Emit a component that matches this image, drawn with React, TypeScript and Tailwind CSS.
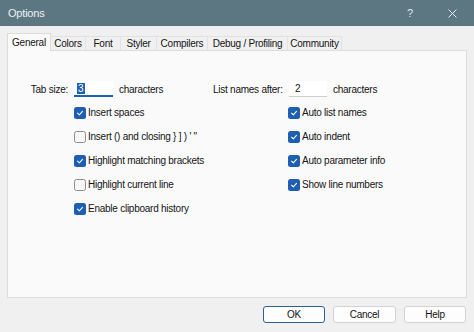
import React from "react";

const font = { fontFamily: '"Liberation Sans", Arial, sans-serif' };

function Check({ checked, label }: { checked: boolean; label: string }) {
  return (
    <div className="flex items-center h-[12px]">
      {checked ? (
        <div className="w-[12px] h-[12px] rounded-[2.5px] bg-[#1e5fb4] flex items-center justify-center shrink-0">
          <svg width="8" height="8" viewBox="0 0 8 8">
            <path d="M1.6 4.2 L3.3 5.8 L6.5 2.3" stroke="white" strokeWidth="1.1" fill="none" strokeLinecap="round" strokeLinejoin="round" />
          </svg>
        </div>
      ) : (
        <div className="w-[12px] h-[12px] rounded-[2.5px] border border-[#8c8c8c] bg-[#f6f6f6] shrink-0" />
      )}
      <span className="ml-[2px] text-[10px] tracking-[-0.25px] text-[#141414] leading-none whitespace-nowrap">{label}</span>
    </div>
  );
}

const tabs = ["General", "Colors", "Font", "Styler", "Compilers", "Debug / Profiling", "Community"];
const tabW = [44, 35, 35, 36, 51, 80, 54];
const insertLabel = "Insert () and closing } ] ) ' \"";

export default function App() {
  return (
    <div className="w-[474px] h-[332px] bg-[#f0f0f0] flex flex-col overflow-hidden" style={font}>
      <div className="h-[26px] shrink-0 bg-[#5c7682] flex items-center pl-[8px]">
        <span className="text-[11px] text-[#eef2f4] tracking-[-0.2px]">Options</span>
        <span className="ml-auto text-[11px] text-[#dfe6ea] mr-[35px]">?</span>
        <svg width="9" height="9" viewBox="0 0 9 9" className="mr-[17px]">
          <path d="M0.5 0.5 L8.5 8.5 M8.5 0.5 L0.5 8.5" stroke="#e6ecef" strokeWidth="1" />
        </svg>
      </div>
      <div className="flex items-end pl-[7px] h-[24px] shrink-0">
        {tabs.map((t, i) =>
          i === 0 ? (
            <div
              key={t}
              className="h-[18px] bg-[#fafafa] border border-b-0 border-[#dcdcdc] flex items-center justify-center text-[10px] tracking-[-0.25px] text-[#141414] relative z-10 mb-[-1px] whitespace-nowrap shrink-0"
              style={{ width: tabW[i] }}
            >
              {t}
            </div>
          ) : (
            <div
              key={t}
              className="h-[14px] bg-[#f0f0f0] border-t border-r border-[#e2e2e2] flex items-center justify-center text-[10px] tracking-[-0.25px] text-[#141414] whitespace-nowrap shrink-0"
              style={{ width: tabW[i] }}
            >
              {t}
            </div>
          )
        )}
      </div>
      <div className="mx-[7px] h-[248px] shrink-0 bg-[#fafafa] border border-[#dcdcdc] flex pt-[30px]">
        <div className="w-[205px] flex flex-col">
          <div className="flex items-center h-[16px]">
            <span className="w-[66px] pr-[6px] text-right text-[10px] tracking-[-0.25px] text-[#141414] whitespace-nowrap">Tab size:</span>
            <div className="w-[39px] h-[16px] bg-white border-b-2 border-[#1e5fb4] flex items-center pl-[3px] text-[10px]">
              <span className="bg-[#1e5fb4] text-white leading-[11px] px-[1px]">3</span>
            </div>
            <span className="ml-[6px] text-[10px] tracking-[-0.25px] text-[#141414] whitespace-nowrap">characters</span>
          </div>
          <div className="ml-[66px] mt-[10px] flex flex-col gap-[12px]">
            <Check checked label="Insert spaces" />
            <Check checked={false} label={insertLabel} />
            <Check checked label="Highlight matching brackets" />
            <Check checked={false} label="Highlight current line" />
            <Check checked label="Enable clipboard history" />
          </div>
        </div>
        <div className="flex flex-col">
          <div className="flex items-center h-[16px]">
            <span className="w-[76px] pr-[7px] text-right text-[10px] tracking-[-0.25px] text-[#141414] whitespace-nowrap">List names after:</span>
            <div className="w-[38px] h-[16px] bg-white border-b border-[#cfcfcf] flex items-center pl-[6px] text-[10px] text-[#141414]">2</div>
            <span className="ml-[6px] text-[10px] tracking-[-0.25px] text-[#141414] whitespace-nowrap">characters</span>
          </div>
          <div className="ml-[75px] mt-[10px] flex flex-col gap-[12px]">
            <Check checked label="Auto list names" />
            <Check checked label="Auto indent" />
            <Check checked label="Auto parameter info" />
            <Check checked label="Show line numbers" />
          </div>
        </div>
      </div>
      <div className="flex justify-end gap-[8px] pr-[8px] mt-[8px]">
        <button className="w-[62px] h-[17px] rounded-[3px] bg-[#fdfdfd] border border-[#2d5f93] text-[10px] tracking-[-0.25px] text-[#141414] leading-none">OK</button>
        <button className="w-[63px] h-[17px] rounded-[3px] bg-[#fdfdfd] border border-[#d2d2d2] text-[10px] tracking-[-0.25px] text-[#141414] leading-none">Cancel</button>
        <button className="w-[62px] h-[17px] rounded-[3px] bg-[#fdfdfd] border border-[#d2d2d2] text-[10px] tracking-[-0.25px] text-[#141414] leading-none">Help</button>
      </div>
    </div>
  );
}
